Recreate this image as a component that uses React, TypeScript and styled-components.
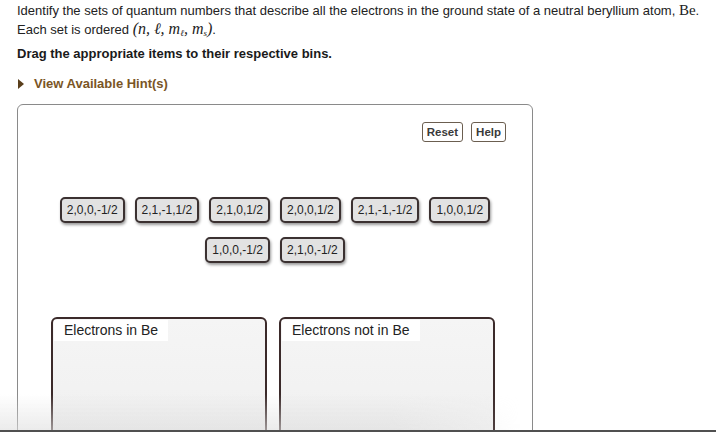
import styled, { createGlobalStyle } from "styled-components";

const GlobalStyle = createGlobalStyle`
  html, body {
    margin: 0;
    padding: 0;
    background: #fff;
    overflow: hidden;
  }
  body {
    font-family: "Liberation Sans", Arial, sans-serif;
    color: #222;
  }
`;

const tilesTop = ["2,0,0,-1/2", "2,1,-1,1/2", "2,1,0,1/2", "2,0,0,1/2", "2,1,-1,-1/2", "1,0,0,1/2"];
const tilesBottom = ["1,0,0,-1/2", "2,1,0,-1/2"];
const bins = ["Electrons in Be", "Electrons not in Be"];

export default function App() {
  return (
    <>
      <GlobalStyle />
      <Page>
        <Prompt>
          <Line>
            Identify the sets of quantum numbers that describe all the electrons in the ground
            state of a neutral beryllium atom, <Roman>Be</Roman>.
          </Line>
          <Line>
            Each set is ordered <Math>(n, ℓ, m<sub>ℓ</sub>, m<sub>s</sub>)</Math>.
          </Line>
        </Prompt>
        <Instruction>Drag the appropriate items to their respective bins.</Instruction>
        <Hint>
          <Arrow />
          View Available Hint(s)
        </Hint>
        <Panel>
          <Toolbar>
            <ToolButton>Reset</ToolButton>
            <ToolButton>Help</ToolButton>
          </Toolbar>
          <TileArea>
            <TileRow>
              {tilesTop.map((t) => (
                <Tile key={t}>{t}</Tile>
              ))}
            </TileRow>
            <TileRow>
              {tilesBottom.map((t) => (
                <Tile key={t}>{t}</Tile>
              ))}
            </TileRow>
          </TileArea>
          <BinRow>
            {bins.map((b) => (
              <Bin key={b}>
                <BinLabel>{b}</BinLabel>
              </Bin>
            ))}
          </BinRow>
        </Panel>
      </Page>
      <BottomFade />
      <BottomEdge />
    </>
  );
}

const Page = styled.div`
  padding: 1px 0 0 17px;
  width: 716px;
  height: 430px;
  box-sizing: border-box;
  overflow: hidden;
`;

const Prompt = styled.div`
  font-size: 13px;
  line-height: 18px;
  color: #222;

  sub {
    font-size: 9px;
    vertical-align: -2px;
    line-height: 0;
  }
`;

const Line = styled.div`
  white-space: nowrap;
`;

const Roman = styled.span`
  font-family: "Liberation Serif", "Times New Roman", serif;
  font-size: 15px;
`;

const Math = styled.span`
  font-family: "Liberation Serif", "Times New Roman", serif;
  font-style: italic;
  font-size: 16px;
`;

const Instruction = styled.div`
  margin-top: 6px;
  font-size: 13px;
  font-weight: bold;
  line-height: 18px;
  color: #1a1a1a;
`;

const Hint = styled.div`
  margin-top: 12px;
  display: flex;
  align-items: center;
  gap: 10px;
  font-size: 13px;
  font-weight: bold;
  line-height: 18px;
  color: #7a5525;
`;

const Arrow = styled.span`
  width: 0;
  height: 0;
  margin-left: 1px;
  border-top: 5px solid transparent;
  border-bottom: 5px solid transparent;
  border-left: 6px solid #5a3f1c;
`;

const Panel = styled.div`
  margin-top: 11px;
  width: 516px;
  height: 360px;
  box-sizing: border-box;
  border: 1px solid #8a8a8a;
  border-radius: 6px;
  display: flex;
  flex-direction: column;
`;

const Toolbar = styled.div`
  display: flex;
  justify-content: flex-end;
  gap: 8px;
  padding: 17px 26px 0 0;
`;

const ToolButton = styled.button`
  font-family: "Liberation Sans", Arial, sans-serif;
  font-size: 11.5px;
  font-weight: bold;
  color: #3a3a3a;
  background: #fff;
  border: 1px solid #6b5e50;
  border-radius: 3px;
  padding: 0 4px;
  height: 20px;
`;

const TileArea = styled.div`
  display: flex;
  flex-direction: column;
  align-items: center;
  gap: 14px;
  margin-top: 55px;
`;

const TileRow = styled.div`
  display: flex;
  justify-content: center;
  gap: 10px;
`;

const Tile = styled.div`
  height: 26px;
  box-sizing: border-box;
  padding: 0 5px;
  display: flex;
  align-items: center;
  font-size: 12px;
  color: #222;
  background: #e2e2e2;
  border: 2px solid #3b3131;
  border-radius: 5px;
  box-shadow: 1px 2px 3px rgba(0, 0, 0, 0.4);
`;

const BinRow = styled.div`
  display: flex;
  justify-content: center;
  gap: 12px;
  margin-top: 54px;
  padding-right: 4px;
`;

const Bin = styled.div`
  width: 216px;
  height: 140px;
  box-sizing: border-box;
  border: 2px solid #3b2a2a;
  border-radius: 6px;
  background: linear-gradient(#f5f5f5, #efefef);
  padding: 1px;
`;

const BinLabel = styled.div`
  display: inline-block;
  background: #fff;
  font-size: 14px;
  line-height: 21px;
  padding: 0 10px 0 10px;
  color: #222;
`;

const BottomFade = styled.div`
  position: fixed;
  left: 0;
  bottom: 2px;
  width: 520px;
  height: 36px;
  background: linear-gradient(rgba(225, 225, 225, 0), rgba(222, 222, 222, 0.6));
  -webkit-mask-image: linear-gradient(to right, #000 75%, transparent);
  mask-image: linear-gradient(to right, #000 75%, transparent);
  pointer-events: none;
`;

const BottomEdge = styled.div`
  position: fixed;
  left: 0;
  right: 0;
  bottom: 0;
  height: 2px;
  background: #505050;
`;
